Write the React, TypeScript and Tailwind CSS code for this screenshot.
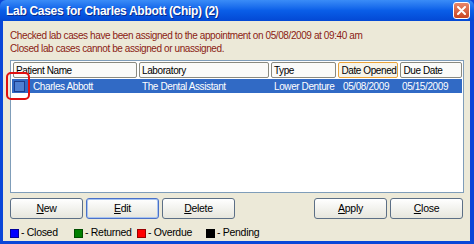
const cols = [
  { label: "Patient Name", w: "w-[127px]" },
  { label: "Laboratory", w: "w-[133px]" },
  { label: "Type", w: "w-[67px]" },
  { label: "Date Opened", w: "w-[60px]", hot: true },
  { label: "Due Date", w: "w-[63px]" },
];

const legend = [
  { color: "bg-[#0000ff]", label: "- Closed", w: "w-[64px]" },
  { color: "bg-[#008000]", label: "- Returned", w: "w-[63px]" },
  { color: "bg-[#ff0000]", label: "- Overdue", w: "w-[69px]" },
  { color: "bg-[#000000]", label: "- Pending", w: "w-[70px]" },
];

function Btn({ label, focused }: { label: string; focused?: boolean }) {
  return (
    <button
      className={`w-[73px] h-[21px] rounded-[3px] border text-[10.5px] tracking-[-0.3px] text-black bg-gradient-to-b from-[#ffffff] to-[#e6e6dd] ${
        focused ? "border-[#4a70c8] shadow-[inset_0_0_0_1px_#a8c4f0]" : "border-[#5c6f86]"
      }`}
    >
      <span className="underline">{label[0]}</span>
      {label.slice(1)}
    </button>
  );
}

export default function App() {
  return (
    <div
      className="w-[474px] h-[244px] flex flex-col bg-[#0a46d8] overflow-hidden"
      style={{ fontFamily: '"Liberation Sans", Arial, sans-serif' }}
    >
      {/* title bar */}
      <div className="h-[23px] flex items-center justify-between pl-[6px] pr-[4px] bg-gradient-to-b from-[#3a8cf7] via-[#0a5ee8] to-[#0448d4] rounded-t-[6px]">
        <span className="text-white font-bold text-[12px] tracking-[-0.3px] [text-shadow:1px_1px_0_#0a2a8a]">
          Lab Cases for Charles Abbott (Chip) (2)
        </span>
        <div className="w-[17px] h-[17px] rounded-[3px] border border-white bg-gradient-to-b from-[#e8866a] to-[#c8441f] flex items-center justify-center">
          <svg width="9" height="9" viewBox="0 0 9 9">
            <path d="M1 1L8 8M8 1L1 8" stroke="white" strokeWidth="2" strokeLinecap="round" />
          </svg>
        </div>
      </div>

      {/* body */}
      <div className="flex-1 ml-[3px] mr-[4px] mb-[3px] bg-[#ece9d8] flex flex-col px-[7px] pt-[8px]">
        <div className="text-[10px] leading-[13px] text-[#8b1c14] tracking-[-0.4px]">
          <div>Checked lab cases have been assigned to the appointment on 05/08/2009 at 09:40 am</div>
          <div>Closed lab cases cannot be assigned or unassigned.</div>
        </div>

        <div className="relative mt-[5px] h-[133px] w-[454px] border border-[#7f9db9] bg-white p-[1px]">
          <div className="flex h-[16px] gap-[2px] pl-[1px]">
            {cols.map((c) => (
              <div
                key={c.label}
                className={`${c.w} h-[16px] flex items-center px-[2px] text-[10px] text-black tracking-[-0.4px] whitespace-nowrap rounded-[2px] border ${
                  c.hot ? "border-[#e8a33a] bg-[#f6f4ea]" : "border-[#8a8a80] bg-[#fbfbf9]"
                }`}
              >
                {c.label}
              </div>
            ))}
          </div>
          <div className="flex h-[14px] items-center bg-[#316ac5] text-white text-[10px] tracking-[-0.4px] whitespace-nowrap mt-[1px]">
            <div className="w-[129px] flex items-center pl-[2px] gap-[8px]">
              <div className="w-[11px] h-[11px] border border-[#1c3c8c] bg-[#4d7fd2]" />
              <span>Charles Abbott</span>
            </div>
            <div className="w-[133px] pl-[1px]">The Dental Assistant</div>
            <div className="w-[69px]">Lower Denture</div>
            <div className="w-[59px]">05/08/2009</div>
            <div>05/15/2009</div>
          </div>
          {/* red annotation */}
          <div className="absolute left-[-5px] top-[11px] w-[24px] h-[28px] rounded-[5px] border-[2px] border-[#e01010]" />
        </div>

        <div className="flex mt-[5px] gap-[3px]">
          <Btn label="New" />
          <Btn label="Edit" focused />
          <Btn label="Delete" />
          <div className="flex-1" />
          <Btn label="Apply" />
          <Btn label="Close" />
        </div>

        <div className="flex items-center mt-[6px] text-[10.5px] text-black tracking-[-0.3px]">
          {legend.map((l) => (
            <div key={l.label} className={`${l.w} flex items-center gap-[2px]`}>
              <div className={`w-[9px] h-[9px] ${l.color} border border-black/40`} />
              <span>{l.label}</span>
            </div>
          ))}
        </div>
      </div>
    </div>
  );
}
